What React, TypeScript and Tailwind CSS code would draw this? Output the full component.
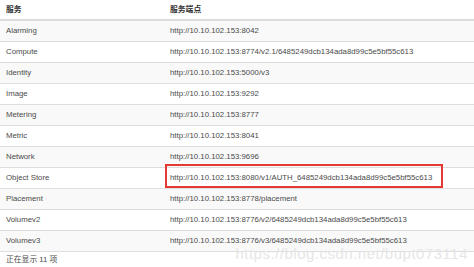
const rows: [string, string][] = [
  ['Alarming', 'http://10.10.102.153:8042'],
  ['Compute', 'http://10.10.102.153:8774/v2.1/6485249dcb134ada8d99c5e5bf55c613'],
  ['Identity', 'http://10.10.102.153:5000/v3'],
  ['Image', 'http://10.10.102.153:9292'],
  ['Metering', 'http://10.10.102.153:8777'],
  ['Metric', 'http://10.10.102.153:8041'],
  ['Network', 'http://10.10.102.153:9696'],
  ['Object Store', 'http://10.10.102.153:8080/v1/AUTH_6485249dcb134ada8d99c5e5bf55c613'],
  ['Placement', 'http://10.10.102.153:8778/placement'],
  ['Volumev2', 'http://10.10.102.153:8776/v2/6485249dcb134ada8d99c5e5bf55c613'],
  ['Volumev3', 'http://10.10.102.153:8776/v3/6485249dcb134ada8d99c5e5bf55c613'],
]

export default function App() {
  return (
    <div
      className="relative w-[474px] h-[267px] overflow-hidden bg-white text-[7.8px] text-[#4a4a4a]"
      style={{ fontFamily: '"Liberation Sans", "Noto Sans CJK SC", sans-serif' }}
    >
      <table className="w-full border-collapse">
        <thead>
          <tr className="h-[20px] border-b-2 border-[#ddd]">
            <th className="w-[163px] pl-[6px] text-left font-bold text-[#333]">服务</th>
            <th className="pl-[7px] text-left font-bold text-[#333]">服务端点</th>
          </tr>
        </thead>
        <tbody>
          {rows.map(([name, url], i) => (
            <tr key={name} className={`h-[21px] border-t border-[#ddd] ${i % 2 === 0 ? 'bg-[#f9f9f9]' : 'bg-white'}`}>
              <td className="pl-[6px]">{name}</td>
              <td className="pl-[7px]">
                {name === 'Object Store' ? (
                  <span className="relative block">
                    {url}
                    <span className="absolute left-[-5px] top-[-8px] w-[278px] h-[24px] border-2 border-[#e53935]" />
                  </span>
                ) : (
                  url
                )}
              </td>
            </tr>
          ))}
        </tbody>
      </table>
      <div className="border-t border-[#ddd] pl-[6px] pt-[2px]">正在显示 11 项</div>
      <div className="absolute right-[6px] bottom-[2px] text-[15px] text-[#e6e6e6] tracking-[0.5px]">
        https://blog.csdn.net/bupt073114
      </div>
    </div>
  )
}
